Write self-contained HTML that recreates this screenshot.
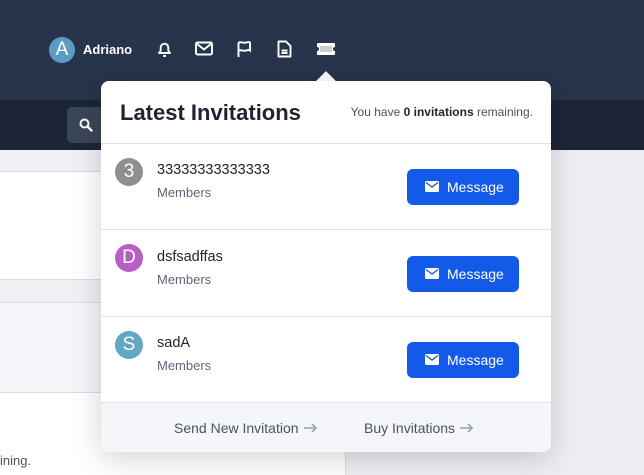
<!DOCTYPE html>
<html><head><meta charset="utf-8"><style>
*{box-sizing:border-box;margin:0;padding:0}
body{width:644px;height:475px;overflow:hidden;position:relative;background:#eceef2;font-family:"Liberation Sans",sans-serif}
.abs{position:absolute}
.hdr{left:0;top:0;width:644px;height:100px;background:#27344c}
.bar{left:0;top:100px;width:644px;height:50px;background:#1c2537}
.search{left:67px;top:107px;width:60px;height:36px;background:#3a4558;border-radius:5px}
.av{border-radius:50%;color:#fff;text-align:center;font-size:19px}
.panel{left:101px;top:81px;width:450px;height:371px;background:#fff;border-radius:8px;box-shadow:0 6px 30px rgba(0,0,0,.18);overflow:hidden}
.row{position:absolute;left:0;width:450px;border-top:1px solid #dde1e8}
.name{position:absolute;left:56px;font-size:14.5px;color:#1e2330}
.mem{position:absolute;left:56px;font-size:13px;color:#5d6677}
.btn{position:absolute;left:306px;width:112px;height:36px;background:#145ae8;border-radius:6px;color:#fff;font-size:14px;line-height:36px;padding-left:40px}
.btn svg{position:absolute;left:18px;top:12px}
.ft{font-size:14px;color:#4a5262}
.ft svg{vertical-align:middle;margin-left:4px;margin-top:-2px}
</style></head><body>
<div class="abs hdr"></div>
<div class="abs bar"></div>
<div class="abs search"><svg class="abs" style="left:12px;top:11px" width="14" height="14" viewBox="0 0 14 14"><circle cx="5.5" cy="5.5" r="4" fill="none" stroke="#fff" stroke-width="2"/><path d="M8.5 8.5L12.5 12.5" stroke="#fff" stroke-width="2.4" stroke-linecap="round"/></svg></div>
<div class="abs" style="left:0;top:150px;width:346px;height:325px;background:#eef0f4"></div>
<div class="abs" style="left:0;top:171px;width:346px;height:109px;background:#fff;border-top:1px solid #d7dbe3;border-bottom:1px solid #d7dbe3"></div>
<div class="abs" style="left:0;top:302px;width:346px;height:91px;background:#f5f6fa;border-top:1px solid #d7dbe3;border-bottom:1px solid #d7dbe3"></div>
<div class="abs" style="left:0;top:393px;width:346px;height:82px;background:#fff;border-right:1px solid #d7dbe3"></div>
<div class="abs" style="left:0;top:453px;font-size:13px;color:#4a5262">ining.</div>
<div class="abs av" style="left:49px;top:37px;width:26px;height:26px;line-height:26px;background:#5a9cc2">A</div>
<div class="abs" style="left:83px;top:42px;color:#fff;font-size:13px;font-weight:bold">Adriano</div>
<svg class="abs" style="left:156px;top:40px" width="17" height="18" viewBox="0 0 17 18" fill="none" stroke="#fff" stroke-width="1.9"><path d="M3 13h11l-1.7-2.2V7.5a3.8 3.8 0 0 0-7.6 0v3.3z" stroke-linejoin="round"/><path d="M7 16h3"/></svg>
<svg class="abs" style="left:195px;top:41px" width="18" height="15" viewBox="0 0 18 15" fill="none" stroke="#fff" stroke-width="1.9"><rect x="1" y="1.5" width="16" height="12" rx="1.5"/><path d="M1.5 2.5l7.5 6 7.5-6"/></svg>
<svg class="abs" style="left:236px;top:40px" width="17" height="18" viewBox="0 0 17 18" fill="none" stroke="#fff" stroke-width="1.9"><path d="M2.5 17V2.5"/><path d="M2.5 2.5c3-1 5 1 8 0s3.5 0 3.5 0v8s-1-1-3.5 0-5-1-8 0"/></svg>
<svg class="abs" style="left:277px;top:40px" width="15" height="18" viewBox="0 0 15 18" fill="none" stroke="#fff" stroke-width="1.9"><path d="M1.5 1.5h7.5l4.5 4.5v10.5h-12z" stroke-linejoin="round"/><path d="M4.5 10.5h6M4.5 13h6"/></svg>
<svg class="abs" style="left:316px;top:42px" width="20" height="14" viewBox="0 0 20 14"><path d="M2 1h16a1 1 0 0 1 1 1v3a2 2 0 0 0 0 4v3a1 1 0 0 1-1 1H2a1 1 0 0 1-1-1V9a2 2 0 0 0 0-4V2a1 1 0 0 1 1-1z" fill="#fff"/><rect x="4" y="4" width="12" height="6" fill="#c9ced8"/></svg>
<div class="abs" style="left:319px;top:74px;width:14px;height:14px;background:#fff;transform:rotate(45deg)"></div>
<div class="abs panel">
 <div class="abs" style="left:19px;top:19px;font-size:22px;font-weight:bold;color:#1e2330">Latest Invitations</div>
 <div class="abs" style="right:18px;top:24px;font-size:12px;color:#4a5262">You have <b style="color:#1e2330">0 invitations</b> remaining.</div>
 <div class="row" style="top:62px;height:86px">
  <div class="abs av" style="left:14px;top:14px;width:28px;height:28px;line-height:28px;background:#8f8f8f">3</div>
  <div class="name" style="top:18px">33333333333333</div><div class="mem" style="top:41px">Members</div>
  <div class="btn" style="top:25px"><svg width="14" height="11" viewBox="0 0 14 11"><rect width="14" height="11" rx="1.5" fill="#fff"/><path d="M1 1.5l6 4.5 6-4.5" fill="none" stroke="#145ae8" stroke-width="1.3"/></svg>Message</div>
 </div>
 <div class="row" style="top:148px;height:87px">
  <div class="abs av" style="left:14px;top:14px;width:28px;height:28px;line-height:28px;background:#b85fc6">D</div>
  <div class="name" style="top:19px">dsfsadffas</div><div class="mem" style="top:42px">Members</div>
  <div class="btn" style="top:26px"><svg width="14" height="11" viewBox="0 0 14 11"><rect width="14" height="11" rx="1.5" fill="#fff"/><path d="M1 1.5l6 4.5 6-4.5" fill="none" stroke="#145ae8" stroke-width="1.3"/></svg>Message</div>
 </div>
 <div class="row" style="top:235px;height:86px">
  <div class="abs av" style="left:14px;top:14px;width:28px;height:28px;line-height:28px;background:#63a7c5">S</div>
  <div class="name" style="top:18px">sadA</div><div class="mem" style="top:41px">Members</div>
  <div class="btn" style="top:25px"><svg width="14" height="11" viewBox="0 0 14 11"><rect width="14" height="11" rx="1.5" fill="#fff"/><path d="M1 1.5l6 4.5 6-4.5" fill="none" stroke="#145ae8" stroke-width="1.3"/></svg>Message</div>
 </div>
 <div class="row" style="top:321px;height:50px;background:#f5f6fa">
  <div class="abs ft" style="left:73px;top:17px">Send New Invitation<svg width="15" height="10" viewBox="0 0 15 10" fill="none" stroke="#9aa1ad" stroke-width="1.6"><path d="M1 5h12M9 1l4 4-4 4"/></svg></div>
  <div class="abs ft" style="left:263px;top:17px">Buy Invitations<svg width="15" height="10" viewBox="0 0 15 10" fill="none" stroke="#9aa1ad" stroke-width="1.6"><path d="M1 5h12M9 1l4 4-4 4"/></svg></div>
 </div>
</div>
</body></html>
